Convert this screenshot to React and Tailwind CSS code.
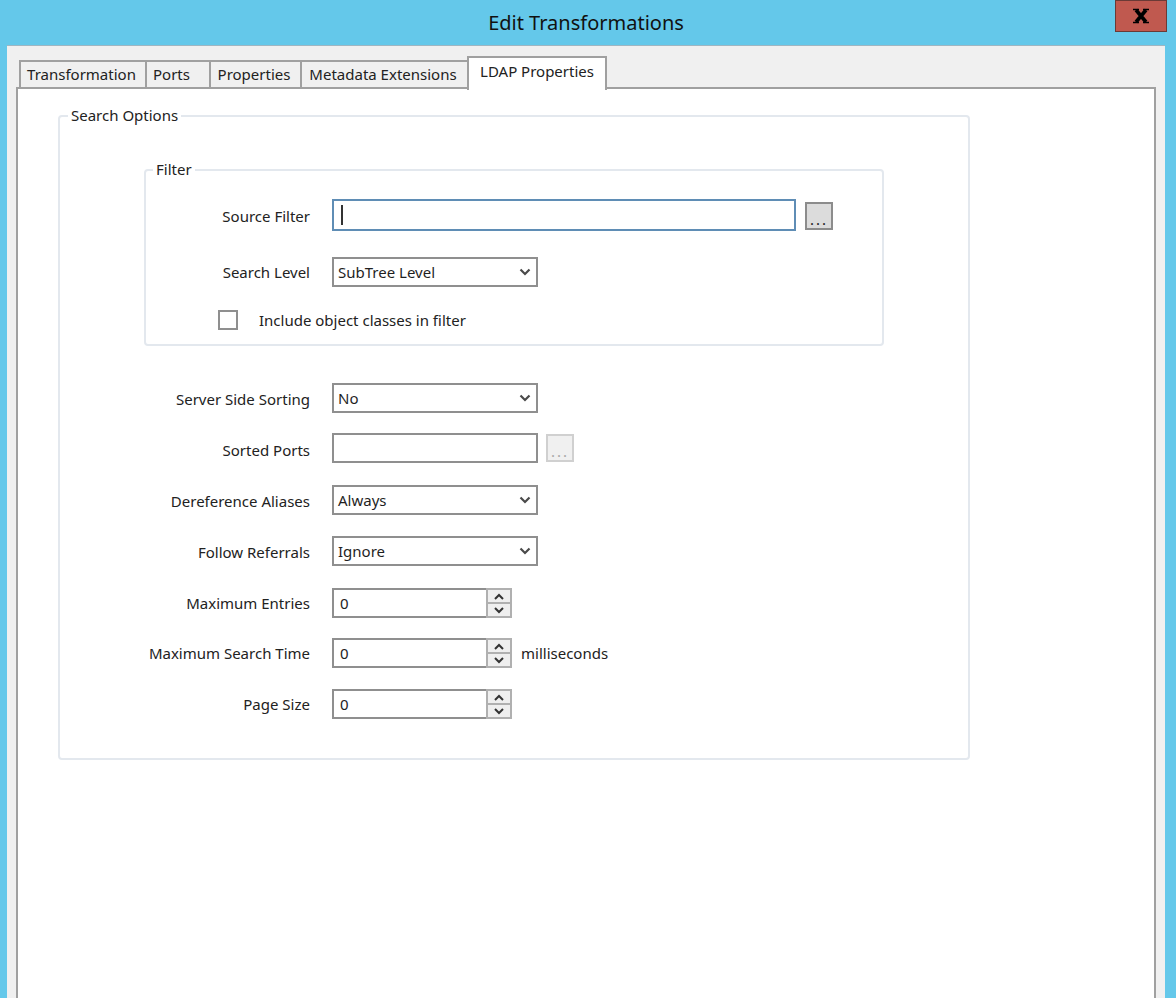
const font = "font-['Noto_Sans',sans-serif]";

function Chevron() {
  return (
    <svg width="12" height="8" viewBox="0 0 12 8" className="ml-auto mr-[5px]">
      <path d="M1.5 1.5 L6 6 L10.5 1.5" fill="none" stroke="#4a4a4a" strokeWidth="2.2" />
    </svg>
  );
}

function Select({ value }) {
  return (
    <div className="flex h-[30px] w-[206px] items-center border-2 border-[#8f8f8f] bg-white pl-[4px] text-[#1f1f1f]">
      <span>{value}</span>
      <Chevron />
    </div>
  );
}

function Row({ label, className, labelClass, children }) {
  return (
    <div className={"flex items-center " + className}>
      <span className={"pr-[22px] text-right text-[#222] " + labelClass}>{label}</span>
      {children}
    </div>
  );
}

function SpinArrow({ up }) {
  return (
    <svg width="10" height="7" viewBox="0 0 10 7">
      <path d={up ? "M1 6 L5 2 L9 6" : "M1 1 L5 5 L9 1"} fill="none" stroke="#333" strokeWidth="2" />
    </svg>
  );
}

function Spinner({ suffix }) {
  return (
    <div className="flex items-center">
      <div className="flex h-[30px] w-[154px] items-center border-2 border-r-0 border-[#8f8f8f] bg-white pl-[6px] text-[#222]">0</div>
      <div className="flex h-[30px] w-[26px] flex-col gap-[2px] bg-[#b0b0b0] p-[2px]">
        <div className="flex flex-1 items-center justify-center bg-[#efefef]"><SpinArrow up /></div>
        <div className="flex flex-1 items-center justify-center bg-[#efefef]"><SpinArrow /></div>
      </div>
      {suffix && <span className="ml-[9px] text-[#222]">{suffix}</span>}
    </div>
  );
}

function Tab({ label, w }) {
  return (
    <div className={"-mr-[2px] flex h-[27px] items-center justify-center border-2 border-b-0 border-[#a0a0a0] bg-[#f0f0f0] text-[#222] " + w}>
      {label}
    </div>
  );
}

export default function App() {
  return (
    <div className={"flex h-[998px] w-full flex-col overflow-hidden bg-[#64c8ea] text-[15px] leading-none " + font}>
      <div className="relative flex h-[45px] shrink-0 items-center justify-center pr-[4px] text-[20px] text-[#111]">
        Edit Transformations
        <div className="absolute right-[9px] top-0 flex h-[32px] w-[52px] items-center justify-center border border-[#6b3a36] bg-[#c0594f]">
          <svg width="18" height="16" viewBox="0 0 18 16">
            <path d="M4 2 L14 14 M14 2 L4 14" stroke="#000" strokeWidth="3.6" fill="none" />
            <path d="M1 1.5 H7 M11 1.5 H17 M1 14.5 H7 M11 14.5 H17" stroke="#000" strokeWidth="1.6" fill="none" />
          </svg>
        </div>
      </div>
      <div className="ml-[7px] mr-[11px] flex flex-1 flex-col border-t border-[#9fb6c2] bg-[#f0f0f0] px-[9px] pt-[10px]">
        <div className="relative z-10 flex h-[31px] items-end pl-[3px]">
          <Tab label="Transformation" w="w-[128px] pr-[3px]" />
          <Tab label="Ports" w="w-[66px] justify-start pl-[6px]" />
          <Tab label="Properties" w="w-[93px] pr-[3px]" />
          <Tab label="Metadata Extensions" w="w-[169px] pr-[3px]" />
          <div className="relative z-10 -mb-[3px] flex h-[34px] w-[140px] items-center justify-center border-2 border-b-0 border-[#a0a0a0] bg-white pb-[6px] text-[#222]">
            LDAP Properties
          </div>
        </div>
        <div className="flex-1 border-2 border-b-0 border-[#a0a0a0] bg-white pl-[40px] pt-[19px]">
          <fieldset className="h-[652px] w-[912px] rounded-[4px] border-2 border-[#e3e8ee] pt-[39px]">
            <legend className="ml-[8px] px-[3px] text-[#222]">Search Options</legend>
            <div className="pl-[84px]">
              <fieldset className="h-[184px] w-[740px] rounded-[4px] border-2 border-[#e3e8ee] pt-[22px]">
                <legend className="ml-[7px] px-[3px] text-[#222]">Filter</legend>
                <Row label="Source Filter" labelClass="w-[186px] pt-[3px]" className="h-[32px]">
                  <div className="flex h-[32px] w-[464px] items-center border-2 border-[#5f8db5] bg-white pl-[7px]">
                    <div className="h-[20px] w-[2px] bg-[#333]" />
                  </div>
                  <div className="ml-[9px] mt-[2px] flex h-[28px] w-[28px] items-center justify-center border-2 border-[#8c8c8c] bg-[#dcdcdc] pt-[6px] tracking-[2px] text-[#222]">...</div>
                </Row>
                <Row label="Search Level" labelClass="w-[186px]" className="mt-[26px]">
                  <Select value="SubTree Level" />
                </Row>
                <div className="mt-[23px] flex items-center pl-[72px]">
                  <div className="h-[20px] w-[20px] border-2 border-[#8f8f8f] bg-white" />
                  <span className="ml-[21px] text-[#222]">Include object classes in filter</span>
                </div>
              </fieldset>
              <Row label="Server Side Sorting" labelClass="w-[188px] pt-[3px]" className="mt-[37px]">
                <Select value="No" />
              </Row>
              <Row label="Sorted Ports" labelClass="w-[188px] pt-[5px]" className="mt-[20px]">
                <div className="h-[30px] w-[206px] border-2 border-[#8f8f8f] bg-white" />
                <div className="ml-[8px] flex h-[28px] w-[28px] items-center justify-center border-2 border-[#d0d0d0] bg-[#f0f0f0] pt-[6px] tracking-[2px] text-[#a8a8a8]">...</div>
              </Row>
              <Row label="Dereference Aliases" labelClass="w-[188px] pt-[3px]" className="mt-[22px]">
                <Select value="Always" />
              </Row>
              <Row label="Follow Referrals" labelClass="w-[188px] pt-[3px]" className="mt-[21px]">
                <Select value="Ignore" />
              </Row>
              <Row label="Maximum Entries" labelClass="w-[188px]" className="mt-[22px]">
                <Spinner />
              </Row>
              <Row label="Maximum Search Time" labelClass="w-[188px]" className="mt-[20px]">
                <Spinner suffix="milliseconds" />
              </Row>
              <Row label="Page Size" labelClass="w-[188px]" className="mt-[21px]">
                <Spinner />
              </Row>
            </div>
          </fieldset>
        </div>
      </div>
    </div>
  );
}
